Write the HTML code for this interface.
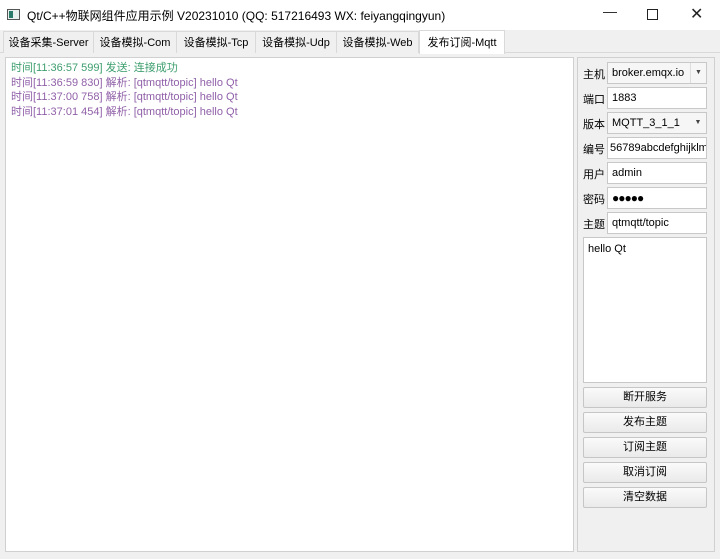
<!DOCTYPE html>
<html><head><meta charset="utf-8"><style>
*{margin:0;padding:0;box-sizing:border-box}
body{width:720px;height:559px;background:#f0f0f0;font-family:"Liberation Sans","Noto Sans CJK SC",sans-serif;font-size:11px;color:#000;position:relative;overflow:hidden}
.title{position:absolute;left:0;top:0;width:720px;height:30px;background:#fff;}
.title .t{position:absolute;left:27px;top:7px;font-size:12px;color:#000}
.ico{position:absolute;left:7px;top:9px;width:13px;height:11px;border:1px solid #555;background:#e8f0ee}
.ico:before{content:"";position:absolute;left:1px;top:1px;width:4px;height:7px;background:#2a7a6a}
.wb{position:absolute;top:6px;font-size:14px;color:#222}
.tabs{position:absolute;top:30px;left:0;width:720px;height:23px;border-bottom:1px solid #d9d9d9}
.tab{position:absolute;top:1px;height:22px;border:1px solid #d9d9d9;border-bottom:none;background:#f0f0f0;font-size:11px;line-height:22px;text-align:center}
.tab.a{background:#fff;top:0;height:24px}
.box{position:absolute;background:#fff;border:1px solid #d0d0d0}
.log div{height:14.5px;line-height:14.5px;font-size:11px}
.g{color:#3d9e6e}.p{color:#9060a8}
.lab{position:absolute;left:583px;font-size:11px}
.in{position:absolute;left:607px;width:100px;height:22px;background:#fff;border:1px solid #c8c8c8;padding-left:4px;line-height:21px;font-size:11px;white-space:nowrap;overflow:hidden}
.arr{position:absolute;right:0;top:0;width:16px;height:20px;border-left:1px solid #ddd;font-size:7px;text-align:center;line-height:20px;color:#444}
.btn{position:absolute;left:583px;width:124px;height:21px;border:1px solid #c6c6c6;border-radius:2px;background:linear-gradient(#fafafa,#eaeaea);text-align:center;line-height:19px;font-size:11px}
</style></head><body>
<div class="title"><div class="ico"></div><div class="t">Qt/C++物联网组件应用示例 V20231010 (QQ: 517216493 WX: feiyangqingyun)</div>
<div class="wb" style="left:603px;top:3px">—</div>
<div style="position:absolute;left:647px;top:9px;width:11px;height:11px;border:1px solid #222"></div>
<div class="wb" style="left:690px;top:4px;font-size:16px">✕</div></div>
<div class="tabs">
<div class="tab" style="left:3px;width:91px">设备采集-Server</div>
<div class="tab" style="left:93px;width:84px">设备模拟-Com</div>
<div class="tab" style="left:176px;width:80px">设备模拟-Tcp</div>
<div class="tab" style="left:255px;width:82px">设备模拟-Udp</div>
<div class="tab" style="left:336px;width:83px">设备模拟-Web</div>
<div class="tab a" style="left:419px;width:86px;line-height:24px">发布订阅-Mqtt</div>
</div>
<div class="box log" style="left:5px;top:57px;width:569px;height:495px;padding:3px 0 0 5px">
<div class="g">时间[11:36:57 599] 发送: 连接成功</div>
<div class="p">时间[11:36:59 830] 解析: [qtmqtt/topic] hello Qt</div>
<div class="p">时间[11:37:00 758] 解析: [qtmqtt/topic] hello Qt</div>
<div class="p">时间[11:37:01 454] 解析: [qtmqtt/topic] hello Qt</div>
</div>
<div style="position:absolute;left:577px;top:57px;width:138px;height:495px;border:1px solid #d0d0d0"></div>
<div class="lab" style="top:66px">主机</div><div class="in" style="top:62px;background:#f6f6f6">broker.emqx.io<div class="arr">▼</div></div>
<div class="lab" style="top:91px">端口</div><div class="in" style="top:87px">1883</div>
<div class="lab" style="top:116px">版本</div><div class="in" style="top:112px;background:#f6f6f6">MQTT_3_1_1<div class="arr" style="border:none">▼</div></div>
<div class="lab" style="top:141px">编号</div><div class="in" style="top:137px;padding-left:2px">56789abcdefghijklm</div>
<div class="lab" style="top:166px">用户</div><div class="in" style="top:162px">admin</div>
<div class="lab" style="top:191px">密码</div><div class="in" style="top:187px;font-size:12px;letter-spacing:-1px">●●●●●</div>
<div class="lab" style="top:216px">主题</div><div class="in" style="top:212px">qtmqtt/topic</div>
<div class="in" style="left:583px;top:237px;width:124px;height:146px;line-height:22px;padding-left:4px">hello Qt</div>
<div class="btn" style="top:387px">断开服务</div>
<div class="btn" style="top:412px">发布主题</div>
<div class="btn" style="top:437px">订阅主题</div>
<div class="btn" style="top:462px">取消订阅</div>
<div class="btn" style="top:487px">清空数据</div>
</body></html>
